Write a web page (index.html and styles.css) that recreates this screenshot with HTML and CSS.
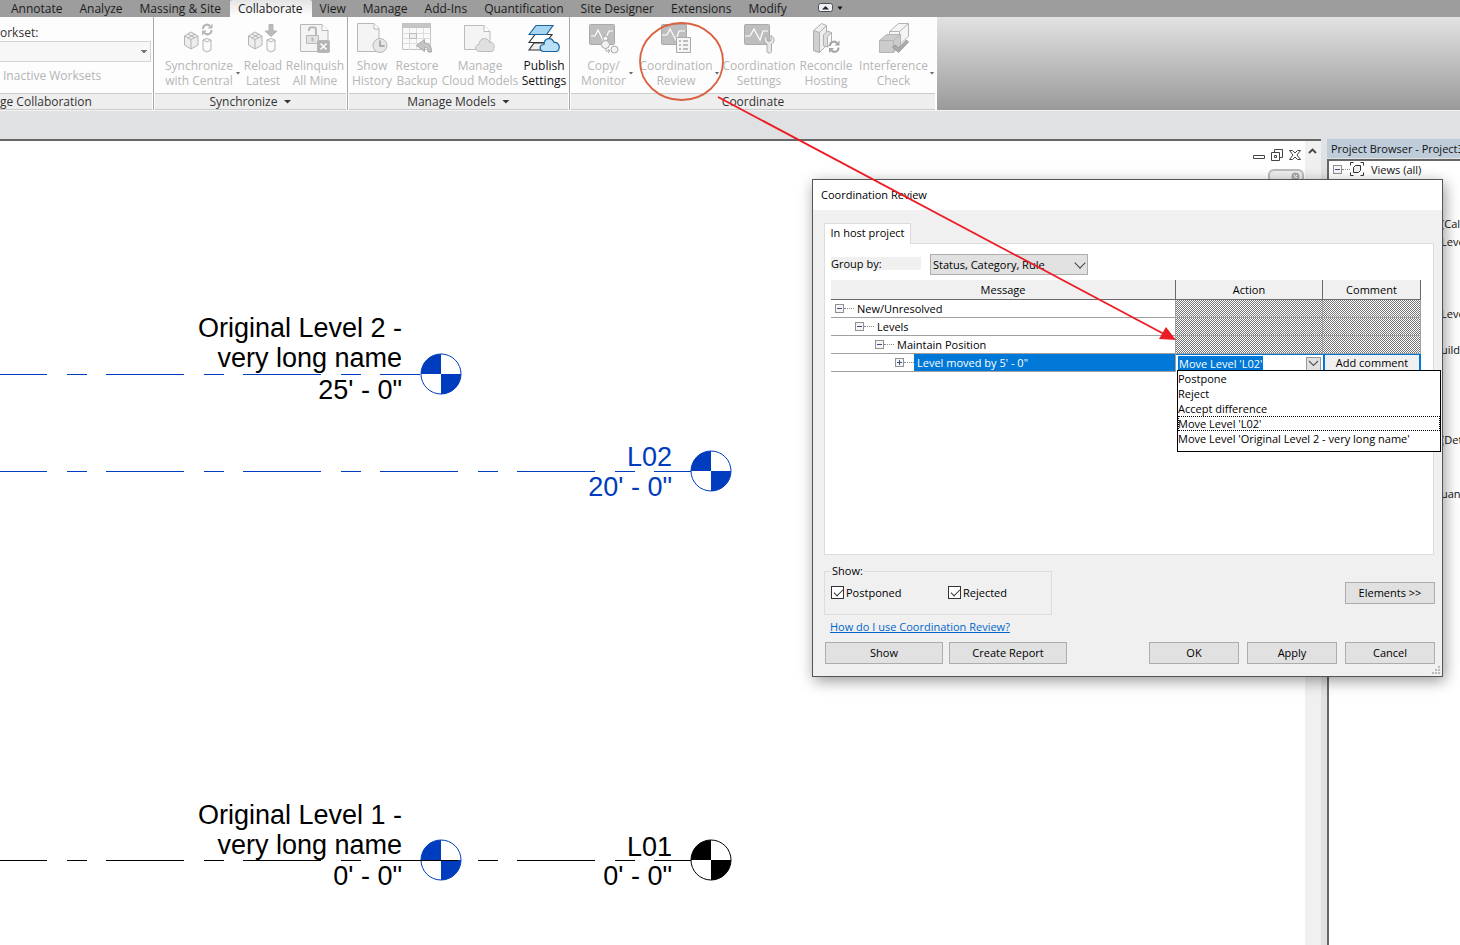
FILE: index.html
```
<!DOCTYPE html>
<html lang="en">
<head>
    <meta charset="UTF-8">
    <meta name="viewport" content="width=device-width, initial-scale=1.0">
    <title>Coordination Review</title>
    <link rel="stylesheet" href="styles.css">
</head>
<body>
    <nav class="tabs">
        <button class="tab">Annotate</button>
        <button class="tab">Analyze</button>
        <button class="tab">Massing &amp; Site</button>
        <button class="tab active">Collaborate</button>
        <button class="tab">View</button>
        <button class="tab">Manage</button>
        <button class="tab">Add-Ins</button>
        <button class="tab">Quantification</button>
        <button class="tab">Site Designer</button>
        <button class="tab">Extensions</button>
        <button class="tab">Modify</button>
        <button class="tab-toggle" aria-label="Minimize ribbon">
            <svg width="26" height="11" viewBox="0 0 26 11"><rect x=".5" y="1.5" width="14" height="8" rx="2" fill="#eef0f3" stroke="#4a5058"/><path d="M4 7.500L7.500 4 11 7.500z" fill="#222"/><path d="M19.500 4.500h5L22 8z" fill="#111"/></svg>
        </button>
    </nav>

    <div class="ribbon">
        <section class="panel panel-worksets">
            <div class="panel-body worksets">
                <label for="workset">orkset:</label>
                <select id="workset" class="workset-select"><option></option></select>
                <span class="inactive">Inactive Worksets</span>
            </div>
            <h2 class="panel-title">ge Collaboration</h2>
        </section>

        <section class="panel">
            <div class="panel-body cols-sync">
                <button class="tool has-menu" disabled>
                    <svg class="icon" viewBox="0 0 32 32" fill="#eee" stroke="#b4b4b4">
                        <path d="M1.500 14L8 10l7 4v9l-7 4-6.500-4z"/><path d="M1.500 14L8 17.500 15 14M8 17.500V27M5 12l7 4M12 12l-7 4" fill="none"/>
                        <path d="M20 18l4-1.500 4 1.500v10l-4 2-4-2z" fill="#fafafa"/><path d="M20 18l4 2 4-2" fill="none"/>
                        <path d="M20 7c0-4.500 4.500-5.500 7-3M28.500 8c0 4.500-4.500 5.500-7 3" fill="none" stroke-width="2"/><path d="M29.500 1.500v5h-5zM19 13.500v-5h5z" fill="#b8b8b8" stroke="none"/>
                    </svg>
                    <span class="label">Synchronize<br>with Central</span><i class="caret"></i>
                </button>
                <button class="tool" disabled>
                    <svg class="icon" viewBox="0 0 32 32" fill="#eee" stroke="#b4b4b4">
                        <path d="M1.500 14L8 10l7 4v9l-7 4-6.500-4z"/><path d="M1.500 14L8 17.500 15 14M8 17.500V27M5 12l7 4M12 12l-7 4" fill="none"/>
                        <path d="M20 18l4-1.500 4 1.500v10l-4 2-4-2z" fill="#fafafa"/><path d="M20 18l4 2 4-2" fill="none"/>
                        <path d="M22 2.500h4V9h4l-6 5.500L18 9h4z" fill="#bbb"/>
                    </svg>
                    <span class="label">Reload<br>Latest</span>
                </button>
                <button class="tool" disabled>
                    <svg class="icon" viewBox="0 0 32 32" fill="#f4f4f4" stroke="#b8b8b8">
                        <path d="M1.500 2.500H23l6 6v21H1.500z"/><path d="M23 2.500v6h6" fill="#fff"/>
                        <path d="M7.500 13.500h12v8h-12z" fill="#e2e2e2"/><path d="M10 9V7.500c0-3 7-3 7 0v6" fill="none" stroke-width="2"/><path d="M13.500 15.500v4" stroke-width="2"/>
                        <rect x="18.500" y="18.500" width="12" height="12" rx="1" fill="#b4b4b4"/><path d="M21.500 21.500l6 6m0-6l-6 6" stroke="#fff" stroke-width="1.500"/>
                    </svg>
                    <span class="label">Relinquish<br>All Mine</span>
                </button>
            </div>
            <h2 class="panel-title">Synchronize <i class="caret big"></i></h2>
        </section>

        <section class="panel">
            <div class="panel-body cols-models">
                <button class="tool" disabled>
                    <svg class="icon" viewBox="0 0 32 32" fill="#f4f4f4" stroke="#b8b8b8">
                        <path d="M1.500 1.500H18l5 5v23H1.500z"/><path d="M18 1.500v5.500h5" fill="#fff"/>
                        <circle cx="24" cy="23.500" r="7" fill="#e6e6e6"/><path d="M24 18.500v5.500h4.500" fill="none" stroke="#999" stroke-width="1.500"/>
                    </svg>
                    <span class="label">Show<br>History</span>
                </button>
                <button class="tool" disabled>
                    <svg class="icon" viewBox="0 0 32 32" fill="#fafafa" stroke="#c2c2c2">
                        <path d="M1.500 1.500h28v26h-28z"/><path d="M1.500 1.500h28v4h-28z" fill="#c6c6c6"/>
                        <path d="M1.500 11.500h28M1.500 16.500h28M1.500 21.500h28M8.500 6v22M15.500 6v22M22.500 6v22" stroke="#ddd"/><path d="M8.500 11.500h7v5h-7z" fill="#eee" stroke="#bbb"/>
                        <path d="M15.500 23.500l8-6v3.500c4 0 7 2 7 9h-3.500c0-4-1-4.500-3.500-4.500v4z" fill="#c4c4c4" stroke="#aaa"/>
                    </svg>
                    <span class="label">Restore<br>Backup</span>
                </button>
                <button class="tool" disabled>
                    <svg class="icon" viewBox="0 0 32 32" fill="#f4f4f4" stroke="#bcbcbc">
                        <path d="M.5 3.500H20l6 6v18H.5z"/><path d="M20 3.500v6h6" fill="#fff"/>
                        <path d="M15 29.500c-5-1-4-7 0-7 0-7 9-8 10.500-2 4-1 6 4 4 6 1 2-1 3-2.500 3z" fill="#e0e0e0"/>
                    </svg>
                    <span class="label">Manage<br>Cloud Models</span>
                </button>
                <button class="tool">
                    <svg class="icon" viewBox="0 0 32 32" stroke="#333" stroke-width="1.200">
                        <path d="M1 28l5-7h18l-5 7z" fill="#eee"/><path d="M1 20.500l6-8h17l-6 8z" fill="#fff"/>
                        <path d="M1 12.500l7-9h17l-6.500 9z" fill="#a8d5f1" stroke="#1e629b"/>
                        <path d="M15 29.500c-4-1-4-7 1-7 0-7 8-8 10-2 4-1 6 4 5 6 0 2-2 3-3.500 3z" fill="#b9e0f6" stroke="#18649e"/>
                    </svg>
                    <span class="label">Publish<br>Settings</span>
                </button>
            </div>
            <h2 class="panel-title">Manage Models <i class="caret big"></i></h2>
        </section>

        <section class="panel">
            <div class="panel-body cols-coordinate">
                <button class="tool has-menu" disabled>
                    <svg class="icon" viewBox="0 0 32 32" fill="none" stroke="#aaa">
                        <rect x="1.500" y="2.500" width="25" height="20" rx="1" fill="#bebebe"/><path d="M3 14h4l3-6 6 12 5-11h4" stroke="#fff" stroke-width="1.200"/>
                        <g fill="#f2f2f2"><circle cx="17.500" cy="16.500" r="2.500"/><circle cx="17.500" cy="22.500" r="4"/><circle cx="26.500" cy="27.500" r="3.500"/></g><path d="M18 26v3h4m-2-2l2 2-2 2"/>
                    </svg>
                    <span class="label">Copy/<br>Monitor</span><i class="caret"></i>
                </button>
                <button class="tool has-menu" disabled>
                    <svg class="icon" viewBox="0 0 32 32" fill="none" stroke="#aaa">
                        <rect x="1.500" y="2.500" width="25" height="20" rx="1" fill="#bebebe"/><path d="M2 13h5l3-6 6 11 3-9h6" stroke="#fff" stroke-width="1.200"/>
                        <path d="M16.500 15.500h14v15h-14z" fill="#f6f6f6"/><path d="M19 19h2m2 0h5m-9 4h2m2 0h5m-9 4h2m2 0h5" stroke-width="1.500"/>
                    </svg>
                    <span class="label">Coordination<br>Review</span><i class="caret"></i>
                </button>
                <button class="tool" disabled>
                    <svg class="icon" viewBox="0 0 32 32" fill="none" stroke="#aaa">
                        <rect x="1.500" y="2.500" width="25" height="20" rx="1" fill="#bebebe"/><path d="M2 14h5l4-7 6 11 3-9h5" stroke="#fff" stroke-width="1.200"/>
                        <path d="M24 13.500v5l2 1 2-1v-5c4 2 4 7 .5 8.500v7.500c0 2-4.500 2-4.500 0V22c-4-2-4-7 0-8.500z" fill="#e8e8e8"/>
                    </svg>
                    <span class="label">Coordination<br>Settings</span>
                </button>
                <button class="tool" disabled>
                    <svg class="icon" viewBox="0 0 32 32" fill="#eee" stroke="#b0b0b0">
                        <path d="M3.500 8.500l8-7 5 2v20l-7 7-6-2z"/><path d="M3.500 8.500l6 2v20l-6-2z" fill="#cfcfcf"/><path d="M9.500 10.500l7-7" />
                        <path d="M13.500 13l4-4 4 1.500V21l-4 4-4-1.500z" fill="#ddd"/><path d="M17.500 14.500l4-4v11l-4 3.500z" fill="#f8f8f8"/>
                        <path d="M20 24c0-4.500 4.500-5.500 7-3M28.500 25.500c0 4.500-4.500 5.500-7 3" fill="none" stroke="#a4a4a4" stroke-width="2"/><path d="M29.500 18.500v5h-5zM19 31v-5h5z" fill="#a4a4a4" stroke="none"/>
                    </svg>
                    <span class="label">Reconcile<br>Hosting</span>
                </button>
                <button class="tool has-menu" disabled>
                    <svg class="icon" viewBox="0 0 32 32" fill="#f4f4f4" stroke="#b4b4b4">
                        <path d="M11.500 9.500l9-8h10v13l-9 8h-10z"/><path d="M11.500 9.500h10v13M21.500 9.500l9-8" fill="none"/>
                        <path d="M1.500 18.500l7-6h14v11l-7 7h-14z" fill="#ccc"/><path d="M1.500 18.500h14v12M15.500 18.500l7-6" fill="none"/>
                        <path d="M14.500 25l3-2 3 3 8-8 2 2-10 10.500z" fill="#aaa" stroke="#999"/>
                    </svg>
                    <span class="label">Interference<br>Check</span><i class="caret"></i>
                </button>
            </div>
            <h2 class="panel-title">Coordinate</h2>
        </section>
    </div>

    <div class="options-bar"></div>

    <main class="workspace">
        <div class="view">
            <svg class="drawing" width="100%" height="100%">
                <!-- level 2 -->
                <g class="blue">
                    <path class="level-line" d="M0 233.500H420"/>
                    <circle cx="441" cy="233" r="20"/><path class="fill" d="M441 233V213A20 20 0 0 0 421 233zM441 233V253A20 20 0 0 0 461 233z"/>
                </g>
                <g class="level-text">
                    <text x="402" y="196">Original Level 2 -</text>
                    <text x="402" y="226">very long name</text>
                    <text x="402" y="258">25' - 0"</text>
                </g>
                <!-- L02, selected -->
                <g class="blue">
                    <path class="level-line" d="M0 330.500H691"/>
                    <circle cx="711" cy="330" r="20"/><path class="fill" d="M711 330V310A20 20 0 0 0 691 330zM711 330V350A20 20 0 0 0 731 330z"/>
                </g>
                <g class="level-text selected">
                    <text x="672" y="325">L02</text>
                    <text x="672" y="355">20' - 0"</text>
                </g>
                <!-- level 1 and L01 share one line -->
                <g class="blue">
                    <circle cx="441" cy="719" r="20"/><path class="fill" d="M441 719V699A20 20 0 0 0 421 719zM441 719V739A20 20 0 0 0 461 719z"/>
                </g>
                <g class="black">
                    <path class="level-line" d="M0 719.500H691"/>
                    <circle cx="711" cy="719" r="20"/><path class="fill" d="M711 719V699A20 20 0 0 0 691 719zM711 719V739A20 20 0 0 0 731 719z"/>
                </g>
                <g class="level-text">
                    <text x="402" y="683">Original Level 1 -</text>
                    <text x="402" y="713">very long name</text>
                    <text x="402" y="744">0' - 0"</text>
                    <text x="672" y="715">L01</text>
                    <text x="672" y="744">0' - 0"</text>
                </g>
            </svg>
            <div class="view-controls">
                <button aria-label="Minimize view"><svg width="12" height="12" viewBox="0 0 12 12"><path d="M.5 6.500h11v3H.5z" fill="#fff" stroke="#444"/></svg></button>
                <button aria-label="Restore view"><svg width="12" height="12" viewBox="0 0 12 12" fill="#fff" stroke="#444"><path d="M3.500.5h8v8h-8z"/><path d="M.5 3.500h8v8h-8z"/><path d="M3.500 6.500h2v2h-2z"/></svg></button>
                <button aria-label="Close view"><svg width="12" height="12" viewBox="0 0 12 12"><path d="M.5 1.500h3L6 4l2.500-2.500h3L8 6l3.500 4.500h-3L6 8l-2.500 2.500h-3L4 6z" fill="#fff" stroke="#444"/></svg></button>
            </div>
            <div class="nav-bar"><svg width="9" height="9" viewBox="0 0 9 9"><circle cx="4.500" cy="4.500" r="4" fill="#aaa"/><path d="M3 3l3 3m0-3L3 6" stroke="#fff"/></svg></div>
        </div>
        <div class="scrollbar"><svg width="9" height="6" viewBox="0 0 9 6"><path d="M1 5l3.500-3.500L8 5" fill="none" stroke="#444" stroke-width="1.800"/></svg></div>
        <aside class="browser">
            <h2 class="browser-title">Project Browser - Project3</h2>
            <div class="browser-tree">
                <div class="browser-root">
                    <i class="twisty"></i><i class="dots"></i>
                    <svg width="14" height="14" viewBox="0 0 14 14" fill="none" stroke="#333"><path d="M.5 3.500v-3h3M10.500.5h3v3M13.500 10.500v3h-3M3.500 13.500h-3v-3"/><path d="M3.500 5.500l2-2h5v5l-2 2h-5z" fill="#eef2f7"/></svg>
                    <span>Views (all)</span>
                </div>
                <ul class="browser-items">
                    <li>(Cal</li>
                    <li>Leve</li>
                    <li></li>
                    <li></li>
                    <li></li>
                    <li>Leve</li>
                    <li></li>
                    <li>uild</li>
                    <li></li>
                    <li></li>
                    <li></li>
                    <li></li>
                    <li>(Det</li>
                    <li></li>
                    <li></li>
                    <li>uant</li>
                </ul>
            </div>
        </aside>
    </main>

    <div class="dialog" role="dialog" aria-labelledby="dialog-title">
        <h1 class="dialog-title" id="dialog-title">Coordination Review</h1>
        <div class="dialog-body">
            <button class="page-tab">In host project</button>
            <div class="page">
                <div class="group-row">
                    <label class="group-label" for="group-by">Group by:</label>
                    <select class="group-select" id="group-by"><option>Status, Category, Rule</option></select>
                </div>
                <table class="review">
                    <colgroup><col class="col-message"><col class="col-action"><col class="col-comment"></colgroup>
                    <thead>
                        <tr><th>Message</th><th>Action</th><th>Comment</th></tr>
                    </thead>
                    <tbody>
                        <tr>
                            <td><div class="node"><i class="twisty"></i><i class="dots"></i><span>New/Unresolved</span></div></td>
                            <td class="hatch"></td><td class="hatch"></td>
                        </tr>
                        <tr>
                            <td><div class="node depth-1"><i class="twisty"></i><i class="dots"></i><span>Levels</span></div></td>
                            <td class="hatch"></td><td class="hatch"></td>
                        </tr>
                        <tr>
                            <td><div class="node depth-2"><i class="twisty"></i><i class="dots"></i><span>Maintain Position</span></div></td>
                            <td class="hatch"></td><td class="hatch"></td>
                        </tr>
                        <tr>
                            <td><div class="node depth-3"><i class="twisty plus"></i><i class="dots"></i><span class="picked">Level moved by 5' - 0"</span></div></td>
                            <td class="action-cell">
                                <div class="combo">
                                    <button class="combo-button" aria-haspopup="listbox" aria-expanded="true">
                                        <span class="combo-value">Move Level 'L02'</span>
                                        <span class="combo-arrow"><svg width="11" height="7" viewBox="0 0 11 7"><path d="M1 1l4.500 4.500L10 1" fill="none" stroke="#555" stroke-width="1.200"/></svg></span>
                                    </button>
                                    <ul class="combo-list" role="listbox">
                                        <li role="option">Postpone</li>
                                        <li role="option">Reject</li>
                                        <li role="option">Accept difference</li>
                                        <li role="option" class="focused" aria-selected="true">Move Level 'L02'</li>
                                        <li role="option">Move Level 'Original Level 2 - very long name'</li>
                                    </ul>
                                </div>
                            </td>
                            <td class="comment-cell"><button class="comment-button">Add comment</button></td>
                        </tr>
                    </tbody>
                </table>
            </div>

            <div class="show-row">
                <fieldset class="show-group">
                    <legend>Show:</legend>
                    <label><input type="checkbox" checked>Postponed</label>
                    <label><input type="checkbox" checked>Rejected</label>
                </fieldset>
                <button class="btn">Elements &gt;&gt;</button>
            </div>
            <a class="help" href="#">How do I use Coordination Review?</a>
            <div class="buttons">
                <button class="btn wide">Show</button>
                <button class="btn wide">Create Report</button>
                <span class="spacer"></span>
                <button class="btn">OK</button>
                <button class="btn">Apply</button>
                <button class="btn">Cancel</button>
            </div>
        </div>
        <svg class="grip" width="8" height="8" viewBox="0 0 8 8"><path d="M6 0h2v2H6zM3 3h2v2H3zM6 3h2v2H6zM0 6h2v2H0zM3 6h2v2H3zM6 6h2v2H6z" fill="#bbb"/></svg>
    </div>

    <!-- callout from the ribbon button to the action column -->
    <svg class="callout" width="1200" height="360" viewBox="0 0 1200 360">
        <ellipse cx="681.500" cy="61.500" rx="41.500" ry="38.500" fill="none" stroke="#d9613f" stroke-width="1.800"/>
        <path d="M718 97L1164 334" stroke="#ed1c24" stroke-width="1.800"/>
        <path d="M1176 340l-17-1 7-12z" fill="#ed1c24"/>
    </svg>
</body>
</html>
```
FILE: styles.css
```
* { box-sizing: border-box; }
body { margin: 0; height: 100vh; display: flex; flex-direction: column; overflow: hidden; position: relative; font: 12px/15px "Open Sans", "Noto Sans", sans-serif; color: #111; background: #dfe1e3; }
button, select, input { font: inherit; color: inherit; margin: 0; }
button { border: 0; padding: 0; background: none; white-space: nowrap; }
h1, h2, ul { margin: 0; padding: 0; font-weight: normal; list-style: none; }
svg { display: block; flex: none; }

/* ribbon tabs */
.tabs { display: flex; height: 17px; padding-left: 3px; background: #9d9d9d; }
.tab { padding: 0 9px 0 8px; line-height: 15px; padding-bottom: 1px; color: #1c1c1c; }
.tab.active { background: linear-gradient(#e4e4e4, #fff); border-radius: 2px 2px 0 0; }
.tab-toggle { margin-left: 22px; padding-bottom: 2px; }

/* ribbon panels */
.ribbon { display: flex; height: 94px; background: linear-gradient(#e2e2e2, #9a9a9a); border-bottom: 1px solid #f4f4f4; }
.panel { flex: none; display: flex; flex-direction: column; background: #fdfdfd; border-right: 1px solid #aaa; padding: 0 1px; }
.panel:last-child { border-right-color: #fff; }
.panel-body { flex: 1; padding-top: 5px; }
.panel-title { height: 17px; line-height: 15px; font-size: 12px; text-align: center; background: #eee; border-top: 1px solid #ccc; border-bottom: 1px solid #ccc; color: #333; display: flex; justify-content: center; align-items: center; gap: 6px; }
.panel-worksets { width: 154px; padding-left: 0; }
.panel-worksets .panel-title { justify-content: flex-start; }
.worksets { display: flex; flex-direction: column; align-items: flex-start; padding-top: 8px; padding-right: 1px; color: #333; }
.workset-select { appearance: none; width: 100%; height: 21px; margin-top: 1px; border: 1px solid #d4d4d4; border-left: 0; border-radius: 0; background: conic-gradient(from -45deg at 50% 100%, #777 90deg, transparent 0) right 2px center / 8px 4px no-repeat, #f7f7f7; }
.inactive { margin: 6px 0 0 3px; color: #b4b4b4; }
.cols-sync, .cols-models, .cols-coordinate { display: grid; align-items: start; }
.cols-sync { grid-template-columns: 78px 44px 60px; padding-left: 8px; padding-right: 1px; }
.cols-models { grid-template-columns: 44px 46px 80px 48px; padding-left: 1px; }
.cols-coordinate { grid-template-columns: 55px 82px 70px 56px 77px; column-gap: 4px; padding-left: 8px; }
.tool { display: grid; grid-template-columns: minmax(0, 1fr); justify-items: center; row-gap: 4px; line-height: 15px; }
.tool.has-menu { grid-template-columns: minmax(0, 1fr) 6px; }
.tool:disabled { color: #b6b6b6; }
.icon { width: 32px; height: 32px; }
.label { grid-row: 2; grid-column: 1; }
.caret { width: 5px; height: 3px; background: #666; clip-path: polygon(0 0, 100% 0, 50% 100%); }
.tool .caret { grid-row: 2; grid-column: 2; align-self: center; }
.caret.big { width: 8px; height: 4px; background: #333; }

.options-bar { height: 28px; background: #dfe1e3; }

/* drawing area */
.workspace { flex: 1; display: flex; min-height: 0; }
.view { flex: 1; position: relative; background: #fff; border-top: 2px solid #666; }
.drawing { position: absolute; top: 0; left: 0; }
.drawing circle { fill: #fff; stroke: currentColor; }
.drawing .fill { fill: currentColor; }
.blue { color: #003cbe; }
.black { color: #000; }
.level-line { stroke: currentColor; stroke-dasharray: 78 20 20 19; stroke-dashoffset: 31; fill: none; }
.level-text { font: 27px "Liberation Sans", Arial, sans-serif; text-anchor: end; }
.level-text.selected { fill: #003cbe; }
.view-controls { position: absolute; top: 8px; right: 4px; display: flex; gap: 6px; }
.nav-bar { position: absolute; top: 28px; right: 1px; width: 36px; height: 30px; border: 2px solid #bbb; border-radius: 6px; background: #eee; display: flex; justify-content: flex-end; padding: 1px 2px; }
.scrollbar { width: 16px; background: #f0f0f0; border-top: 2px solid #666; padding: 7px 3px; }

/* project browser */
.browser { width: 139px; padding-left: 6px; overflow: hidden; font-size: 11px; display: flex; flex-direction: column; }
.browser-title { height: 19px; padding-left: 4px; line-height: 19px; font-size: 11px; white-space: nowrap; background: #bfcddb; }
.browser-tree { flex: 1; margin-top: 1px; background: #fff; border-top: 2px solid #666; border-left: 2px solid #666; }
.browser-root { display: flex; align-items: center; height: 16px; padding-left: 4px; }
.browser-root .dots { width: 8px; }
.browser-root span { margin-left: 7px; }
.browser-items { padding: 38px 0 0 112px; }
.browser-items li { height: 18px; line-height: 18px; white-space: nowrap; }

.twisty { flex: none; width: 9px; height: 9px; border: 1px solid #919191; background: linear-gradient(#3d4f87, #3d4f87) center / 5px 1px no-repeat, #f5f5f5; }
.twisty.plus { background: linear-gradient(#3d4f87, #3d4f87) center / 5px 1px no-repeat, linear-gradient(#3d4f87, #3d4f87) center / 1px 5px no-repeat, #f5f5f5; }
.dots { flex: none; width: 10px; border-top: 1px dotted #888; }

/* dialog */
.dialog { position: absolute; left: 812px; top: 179px; width: 631px; border: 1px solid #555; background: #f0f0f0; box-shadow: 2px 4px 14px rgba(0,0,0,0.4); font-size: 11px; color: #000; }
.dialog-title { height: 30px; padding-left: 8px; line-height: 30px; font-size: 11px; background: #fff; }
.dialog-body { padding: 13px 7px 12px 11px; }
.page-tab { position: relative; z-index: 1; display: block; width: 87px; height: 21px; margin-bottom: -1px; padding-bottom: 3px; background: #fff; border: 1px solid #dcdcdc; border-bottom: 0; }
.page { height: 312px; margin-right: 1px; padding: 10px 12px 0 6px; background: #fff; border: 1px solid #dcdcdc; }
.group-row { position: relative; display: flex; gap: 9px; align-items: flex-start; }
.group-row::after { content: ""; position: absolute; left: 245px; top: 5px; width: 7px; height: 7px; border: solid #444; border-width: 0 1px 1px 0; transform: rotate(45deg); pointer-events: none; }
.group-label { width: 90px; height: 13px; margin-top: 3px; line-height: 13px; background: #f0f0f0; }
.group-select { appearance: none; width: 158px; height: 21px; padding: 0 2px; border: 1px solid #adadad; border-radius: 0; background: #e1e1e1; }

.review { width: 100%; margin-top: 5px; table-layout: fixed; border-collapse: separate; border-spacing: 0; font-size: 11px; }
.col-message { width: 345px; }
.col-action { width: 147px; }
.review th { height: 20px; padding: 0; font-weight: normal; background: #f0f0f0; border-right: 1px solid #696969; border-bottom: 1px solid #696969; }
.review td { height: 18px; padding: 0; border-bottom: 1px solid #a0a0a0; border-right: 1px solid #a0a0a0; }
.review .hatch { background: repeating-conic-gradient(#777 0 25%, #fff 0 50%) 0 0 / 2px 2px; }
.node { display: flex; align-items: center; height: 17px; padding-left: 4px; }
.node span { flex: 1; padding-left: 3px; line-height: 17px; }
.depth-1 { padding-left: 24px; }
.depth-2 { padding-left: 44px; }
.depth-3 { padding-left: 64px; }
.node .picked { background: #0078d7; color: #fff; }
.review .action-cell { border: 0; background: #fff; }
.combo { position: relative; height: 18px; padding: 1px 2px; border-top: 1px solid #0078d7; }
.combo-button { display: flex; justify-content: space-between; align-items: center; width: 100%; height: 15px; }
.combo-value { background: #0078d7; color: #fff; line-height: 15px; padding: 0 1px; }
.combo-arrow { display: flex; justify-content: center; align-items: center; width: 15px; height: 14px; background: #e1e1e1; border: 1px solid #999; }
.combo-list { position: absolute; left: 1px; top: 15px; width: 264px; height: 82px; background: #fff; border: 1px solid #000; }
.combo-list li { height: 15px; line-height: 15px; white-space: nowrap; }
.combo-list .focused { outline: 1px dotted #000; outline-offset: -1px; }
.review .comment-cell { border: 1px solid #0078d7; border-width: 1px 2px; background: #f0f0f0; }
.comment-button { display: block; width: 100%; height: 16px; line-height: 16px; }

.show-row { display: flex; justify-content: space-between; align-items: flex-start; margin-top: 8px; }
.show-group { display: flex; width: 228px; height: 52px; margin: 0; padding: 7px 6px; border: 1px solid #dcdcdc; }
.show-group legend { padding: 0 1px; line-height: 16px; }
.show-group label { flex: 1; display: flex; align-items: flex-start; line-height: 14px; gap: 2px; }
.show-group label + label { flex: 0 0 97px; }
.show-group input { appearance: none; width: 13px; height: 13px; border: 1px solid #333; background: #fff; position: relative; }
.show-group input:checked::after { content: ""; position: absolute; left: 4px; top: 0; width: 4px; height: 8px; border: solid #333; border-width: 0 1px 1px 0; transform: rotate(45deg); }
.btn { width: 90px; height: 22px; padding-bottom: 2px; border: 1px solid #adadad; background: #e1e1e1; }
.btn.wide { width: 118px; }
.show-row .btn { margin-top: 19px; }
.help { display: block; width: max-content; margin: 4px 0 0 6px; line-height: 16px; color: #0066cc; }
.buttons { display: flex; gap: 6px; margin-top: 7px; padding-left: 1px; }
.buttons .spacer { flex: 1; }
.buttons .spacer ~ .btn { margin-left: 2px; }
.grip { position: absolute; right: 2px; bottom: 2px; }

.callout { position: absolute; left: 0; top: 0; pointer-events: none; }
```
